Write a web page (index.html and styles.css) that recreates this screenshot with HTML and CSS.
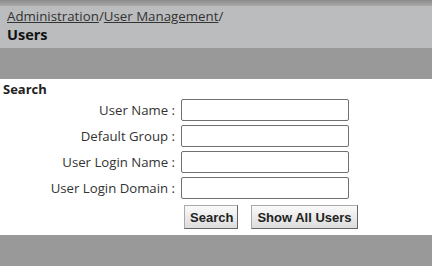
FILE: index.html
```html
<!DOCTYPE html>
<html lang="en">
<head>
    <meta charset="utf-8">
    <title>Users</title>
    <link rel="stylesheet" href="styles.css">
</head>
<body>
    <div class="topbar"></div>
    <div class="header">
        <div class="crumbs"><a href="#">Administration</a>/<a href="#">User Management</a>/</div>
        <div class="title">Users</div>
    </div>
    <div class="band"></div>
    <div class="search">
        <div class="search-title">Search</div>
        <div class="form">
            <label for="uname">User Name :</label>
            <input type="text" id="uname">
            <label for="ugroup">Default Group :</label>
            <input type="text" id="ugroup">
            <label for="ulogin">User Login Name :</label>
            <input type="text" id="ulogin">
            <label for="udomain">User Login Domain :</label>
            <input type="text" id="udomain">
        </div>
        <div class="buttons">
            <button class="btn btn-search">Search</button>
            <button class="btn btn-all">Show All Users</button>
        </div>
    </div>
    <div class="band"></div>
</body>
</html>
```

FILE: styles.css
```css
body {
    margin: 0;
    font-family: "Open Sans", sans-serif;
    font-size: 12px;
    color: #333;
    background: #fff;
}
.topbar {
    height: 6px;
    background: linear-gradient(#8a8a8a, #a9a9a9);
}
.header {
    height: 42px;
    background: #bbbcbd;
    padding-left: 7px;
    box-sizing: border-box;
}
.crumbs {
    padding-top: 1px;
    font-size: 13.3px;
    line-height: 18px;
    color: #333;
}
.crumbs a {
    color: #333;
}
.title {
    font-size: 14.5px;
    font-weight: bold;
    line-height: 20px;
    color: #111;
}
.band {
    height: 31px;
    background: #999999;
}
.search {
    padding: 2px 0 6px 3px;
}
.search-title {
    font-weight: bold;
    font-size: 13px;
    line-height: 16px;
    color: #222;
}
.form {
    display: grid;
    grid-template-columns: 172px 168px;
    column-gap: 6px;
    row-gap: 4px;
    margin-top: 2px;
}
.form label {
    text-align: right;
    font-size: 13.2px;
    line-height: 22px;
    color: #333;
}
.form input {
    height: 22px;
    box-sizing: border-box;
    border: 1px solid #707070;
    border-radius: 2px;
    margin: 0;
    padding: 1px 3px;
}
.buttons {
    display: flex;
    gap: 13px;
    margin: 6px 0 0 181px;
}
.btn {
    height: 24px;
    padding: 0 5px;
    font-family: "Liberation Sans", Arial, sans-serif;
    font-size: 13px;
    font-weight: bold;
    color: #222;
    background: linear-gradient(#fafafa, #dcdcdc);
    border: 1px solid #aaa;
    border-right-color: #666;
    border-bottom-color: #666;
}
.btn-search {
    width: 54px;
}
.btn-all {
    width: 107px;
}
```
